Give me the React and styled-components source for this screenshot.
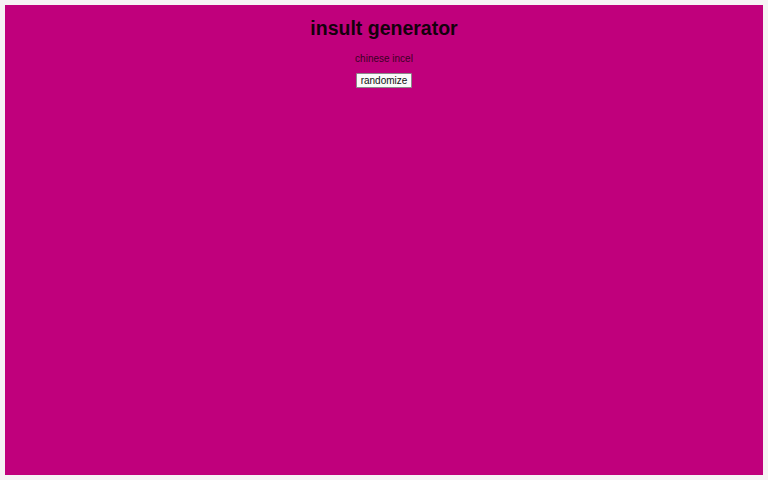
import { useState } from "react";
import styled, { createGlobalStyle } from "styled-components";

const GlobalStyle = createGlobalStyle`
  body {
    margin: 0;
    background: #f6f2f4;
    font-family: "Liberation Sans", Arial, sans-serif;
  }
`;

const Page = styled.div`
  margin: 5px;
  height: 470px;
  background: #c0007c;
  display: flex;
  flex-direction: column;
  align-items: center;
`;

const Title = styled.h1`
  margin: 12px 0 0;
  font-size: 19.5px;
  font-weight: bold;
  color: #14000c;
`;

const Insult = styled.p`
  margin: 13px 0 0;
  font-size: 10px;
  color: #3a0024;
`;

const RandomButton = styled.button`
  margin-top: 9px;
  padding: 1px 4px;
  font-family: "Liberation Sans", Arial, sans-serif;
  font-size: 10px;
  color: #111;
  background: #fafafa;
  border: 1px solid #8a8a8a;
  border-radius: 1px;
  cursor: pointer;
`;

const adjectives = ["chinese", "smelly", "lazy", "boring"];
const nouns = ["incel", "goblin", "clown", "potato"];

const App = () => {
  const [insult, setInsult] = useState("chinese incel");

  const randomize = () => {
    const a = adjectives[Math.floor(Math.random() * adjectives.length)];
    const n = nouns[Math.floor(Math.random() * nouns.length)];
    setInsult(`${a} ${n}`);
  };

  return (
    <>
      <GlobalStyle />
      <Page>
        <Title>insult generator</Title>
        <Insult>{insult}</Insult>
        <RandomButton onClick={randomize}>randomize</RandomButton>
      </Page>
    </>
  );
};

export default App;
